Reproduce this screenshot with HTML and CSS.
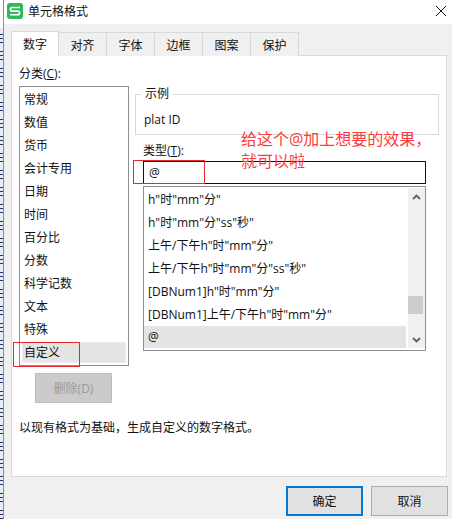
FILE: index.html
```html
<!DOCTYPE html>
<html lang="zh">
<head>
<meta charset="utf-8">
<title>单元格格式</title>
<link rel="stylesheet" href="styles.css">
</head>
<body>
<div class="strip"></div>
<div class="dialog">
  <header class="titlebar">
    <svg class="logo" viewBox="0 0 16 16" width="16" height="16"><rect width="16" height="16" rx="3" fill="#2dbb5a"/><path d="M13 4.5H5.2a1.8 1.8 0 0 0 0 3.6h5.6a1.8 1.8 0 0 1 0 3.6H3" fill="none" stroke="#fff" stroke-width="1.6"/></svg>
    <span class="title">单元格格式</span>
    <svg class="close" viewBox="0 0 10 10" width="10" height="10"><path d="M0 0l10 10M10 0L0 10" stroke="#111" stroke-width="1" fill="none"/></svg>
  </header>
  <div class="body">
    <nav class="tabs">
      <span class="tab active">数字</span><span class="tab">对齐</span><span class="tab">字体</span><span class="tab">边框</span><span class="tab">图案</span><span class="tab">保护</span>
    </nav>
    <section class="panel">
      <div class="columns">
        <div class="left">
          <div class="label">分类(<u>C</u>):</div>
          <ul class="cats">
            <li>常规</li><li>数值</li><li>货币</li><li>会计专用</li><li>日期</li><li>时间</li><li>百分比</li><li>分数</li><li>科学记数</li><li>文本</li><li>特殊</li><li class="sel">自定义</li>
          </ul>
          <button class="delete">删除(D)</button>
        </div>
        <div class="right">
          <fieldset class="sample"><legend>示例</legend><div class="sample-text">plat ID</div></fieldset>
          <div class="label type-label">类型(<u>T</u>):</div>
          <div class="type-input">@</div>
          <div class="formats">
            <ul class="fmt-list">
              <li>h"时"mm"分"</li>
              <li>h"时"mm"分"ss"秒"</li>
              <li>上午/下午h"时"mm"分"</li>
              <li>上午/下午h"时"mm"分"ss"秒"</li>
              <li>[DBNum1]h"时"mm"分"</li>
              <li>[DBNum1]上午/下午h"时"mm"分"</li>
              <li class="sel">@</li>
            </ul>
            <div class="scrollbar">
              <span class="arrow"><svg viewBox="0 0 9 6" width="9" height="6"><path d="M1 5l3.5-3.5L8 5" fill="none" stroke="#606060" stroke-width="1.8"/></svg></span>
              <span class="track"><span class="thumb"></span></span>
              <span class="arrow"><svg viewBox="0 0 9 6" width="9" height="6"><path d="M1 1l3.5 3.5L8 1" fill="none" stroke="#606060" stroke-width="1.8"/></svg></span>
            </div>
          </div>
        </div>
      </div>
      <p class="desc">以现有格式为基础，生成自定义的数字格式。</p>
    </section>
    <footer class="actions">
      <button class="btn primary">确定</button>
      <button class="btn">取消</button>
    </footer>
  </div>
  <div class="note">给这个@加上想要的效果，<br>就可以啦</div>
  <div class="mark mark-type"></div>
  <div class="mark mark-custom"></div>
</div>
</body>
</html>
```
FILE: styles.css
```css
* { box-sizing: border-box; }
html, body { margin: 0; height: 100%; }
body {
  display: flex;
  width: 452px;
  height: 519px;
  overflow: hidden;
  background: #f0f0f0;
  font-family: "Open Sans", "Noto Sans CJK SC", sans-serif;
  font-size: 12px;
  color: #111;
}
.strip {
  position: relative;
  z-index: 2;
  width: 4px;
  margin-right: -1px;
  flex: none;
  background:
    linear-gradient(180deg, #fff 0 28px, transparent 28px),
    repeating-linear-gradient(180deg, #2a2f66 0 1px, #e8eef6 1px 4px, #2a2f66 4px 5px, #e8eef6 5px 8px, #2a2f66 8px 9px, #e8eef6 9px 17px);
  border-right: 1px solid #5a9bd6;
}
.dialog { position: relative; flex: 1; display: flex; flex-direction: column; min-width: 0; }
.titlebar {
  height: 24px;
  flex: none;
  background: #fff;
  display: flex;
  align-items: center;
  padding: 0 6px 2px 4px;
}
.logo { flex: none; }
.title { margin-left: 5px; font-size: 12px; }
.close { margin-left: auto; }
.body { flex: 1; padding: 7px 5px 0 8px; display: flex; flex-direction: column; }
.tabs { display: flex; height: 25px; flex: none; position: relative; z-index: 1; }
.tab {
  width: 48px;
  height: 24px;
  margin-top: 1px;
  background: #f0f0f0;
  border: 1px solid #d9d9d9;
  border-bottom: none;
  border-left: none;
  display: flex;
  align-items: center;
  justify-content: center;
  font-size: 12px;
}
.tab.active {
  height: 25px;
  margin-top: 0;
  background: #fff;
  border-left: 1px solid #d9d9d9;
}
.panel {
  height: 422px;
  flex: none;
  margin-top: -1px;
  background: #fff;
  border: 1px solid #d9d9d9;
  padding: 10px 0 0 7px;
  display: flex;
  flex-direction: column;
}
.columns { display: flex; }
.left { width: 116px; flex: none; }
.label { height: 15px; line-height: 15px; font-size: 12px; }
.cats {
  list-style: none;
  margin: 5px 0 0;
  padding: 1px 2px 2px 2px;
  width: 110px;
  height: 280px;
  border: 1px solid #8c8f96;
}
.cats li { height: 23px; line-height: 23px; padding-left: 2px; }
.cats li.sel { background: #e4e4e4; height: 21px; line-height: 21px; margin-top: 1px; outline: 1px dotted #f4f4f4; outline-offset: -1px; }
.delete {
  display: block;
  width: 77px;
  height: 30px;
  margin: 7px 0 0 16px;
  background: #cbcbcb;
  border: 1px solid #bdbdbd;
  color: #9a9a9a;
  font: inherit;
}
.right { width: 304px; flex: none; }
.sample {
  margin: 22px 0 0;
  padding: 0;
  height: 47px;
  width: 304px;
  border: 1px solid #d9d9d9;
}
.sample legend { padding: 0 4px; margin-left: 5px; font-size: 12px; line-height: 12px; height: 12px; }
.sample-text { padding: 12px 0 0 8px; line-height: 16px; }
.type-label { margin: 8px 0 0 8px; }
.type-input {
  margin: 3px 0 0 8px;
  height: 23px;
  width: 283px;
  border: 1px solid #111;
  padding-left: 5px;
  line-height: 21px;
}
.formats {
  margin: 2px 0 0 8px;
  width: 283px;
  height: 165px;
  padding: 1px 0 2px;
  border: 1px solid #8c8f96;
  display: flex;
}
.fmt-list { list-style: none; margin: 0; padding: 0; flex: 1; min-width: 0; }
.fmt-list li { height: 23px; line-height: 23px; padding-left: 4px; white-space: nowrap; }
.fmt-list li.sel { background: #e4e4e4; height: 22px; line-height: 22px; }
.scrollbar { width: 17px; margin-left: 2px; flex: none; background: #f0f0f0; display: flex; flex-direction: column; }
.arrow { height: 17px; padding-right: 1px; display: flex; align-items: center; justify-content: center; flex: none; }
.track { flex: 1; display: flex; flex-direction: column; justify-content: flex-end; }
.thumb { display: block; height: 18px; margin: 0 2px 17px 0; background: #cdcdcd; }
.desc { margin: 17px 0 0; line-height: 16px; }
.actions { display: flex; justify-content: flex-end; gap: 8px; margin: 9px -1px 0 0; }
.btn {
  width: 77px;
  height: 30px;
  background: #e1e1e1;
  border: 1px solid #adadad;
  font: inherit;
  color: #111;
}
.btn.primary { border: 2px solid #0078d7; }
.note {
  position: absolute;
  left: 238px;
  top: 128px;
  font-size: 16px;
  line-height: 22px;
  color: #ff3b3b;
  white-space: nowrap;
}
.mark { position: absolute; border: 1px solid #e8262c; }
.mark-type { left: 130px; top: 160px; width: 72px; height: 24px; }
.mark-custom { left: 10px; top: 342px; width: 67px; height: 25px; }
```
